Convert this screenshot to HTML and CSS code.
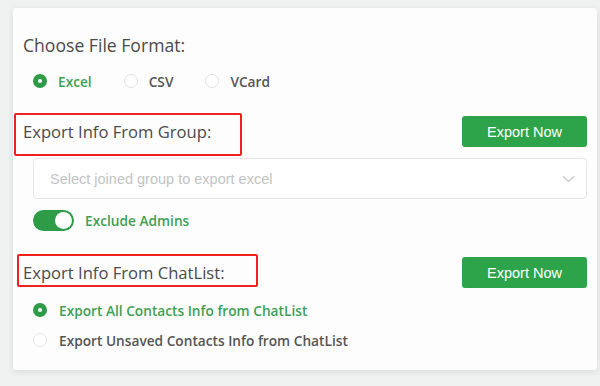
FILE: index.html
```html
<!DOCTYPE html>
<html>
<head>
<meta charset="utf-8">
<link rel="stylesheet" href="styles.css">
</head>
<body>
<div class="card">
  <div class="title">Choose File Format:</div>
  <div class="radio-row">
    <label class="radio checked"><span class="dot"></span>Excel</label>
    <label class="radio"><span class="dot"></span>CSV</label>
    <label class="radio"><span class="dot"></span>VCard</label>
  </div>

  <div class="section-head first">
    <div class="heading">Export Info From Group:<span class="mark mark-group"></span></div>
    <button class="btn">Export Now</button>
  </div>
  <div class="select">
    <span class="placeholder">Select joined group to export excel</span>
    <svg class="chev" width="13" height="8" viewBox="0 0 13 8"><path d="M1 1.2 L6.5 6.5 L12 1.2" fill="none" stroke="#c9c9c9" stroke-width="1.3"/></svg>
  </div>
  <div class="toggle-row">
    <span class="toggle"><span class="knob"></span></span>
    <span class="toggle-label">Exclude Admins</span>
  </div>

  <div class="section-head second">
    <div class="heading">Export Info From ChatList:<span class="mark mark-chat"></span></div>
    <button class="btn">Export Now</button>
  </div>
  <div class="radio-list">
    <label class="radio checked"><span class="dot"></span>Export All Contacts Info from ChatList</label>
    <label class="radio"><span class="dot"></span>Export Unsaved Contacts Info from ChatList</label>
  </div>
</div>
</body>
</html>
```
FILE: styles.css
```css
html, body {
  margin: 0;
  padding: 0;
  background: #eff0f0;
  width: 600px;
  height: 386px;
  overflow: hidden;
}
.card {
  box-sizing: border-box;
  margin: 8px 0 0 13px;
  width: 584px;
  height: 362px;
  padding: 25px 10px 0 10px;
  background: #fdfdfd;
  border-radius: 3px;
  box-shadow: 0 2px 6px rgba(0,0,0,0.09);
  font-family: "Open Sans", "Noto Sans", sans-serif;
}
.title {
  font-size: 17.6px;
  line-height: 24px;
  color: #4a4a4a;
}
.heading {
  font-size: 16.6px;
  line-height: 24px;
  color: #4a4a4a;
}
.radio-row {
  display: flex;
  align-items: center;
  height: 20px;
  margin-top: 14px;
  padding-left: 10px;
}
.radio {
  display: flex;
  align-items: center;
  font-size: 13.7px;
  font-weight: 600;
  color: #555;
  height: 20px;
}
.radio-row .radio { margin-right: 32px; }
.radio .dot {
  box-sizing: border-box;
  width: 14px;
  height: 14px;
  border-radius: 50%;
  border: 1px solid #e2e2e2;
  background: #fff;
  margin-right: 11px;
  position: relative;
}
.radio.checked { color: #3f9f55; }
.radio.checked .dot {
  border: none;
  background: #2e9c47;
}
.radio.checked .dot::after {
  content: "";
  position: absolute;
  left: 5px;
  top: 5px;
  width: 4px;
  height: 4px;
  border-radius: 50%;
  background: #fff;
}
.section-head {
  display: flex;
  align-items: center;
  justify-content: space-between;
  height: 31px;
}
.section-head.first { margin-top: 25px; }
.section-head.second { margin-top: 26px; }
.heading { position: relative; }
.mark {
  position: absolute;
  border: 2.5px solid #f0201f;
  border-radius: 2px;
  pointer-events: none;
}
.mark-group { left: -9px; top: -7px; width: 224px; height: 39px; }
.mark-chat { left: -6px; top: -7px; width: 237px; height: 29px; }
.btn {
  width: 125px;
  height: 31px;
  border: none;
  border-radius: 3px;
  background: #2ea44a;
  color: #fff;
  font-family: "Liberation Sans", Arial, sans-serif;
  font-size: 14.5px;
  padding: 0;
}
.select {
  box-sizing: border-box;
  margin: 11px 0 0 10px;
  height: 41px;
  border: 1px solid #e6e6e6;
  border-radius: 4px;
  background: #fff;
  display: flex;
  align-items: center;
  justify-content: space-between;
  padding: 0 11px 0 16px;
}
.placeholder {
  font-family: "Liberation Sans", Arial, sans-serif;
  font-size: 14.5px;
  color: #c3c3c3;
}
.toggle-row {
  display: flex;
  align-items: center;
  margin: 11px 0 0 10px;
  height: 21px;
}
.toggle {
  position: relative;
  width: 41px;
  height: 21px;
  border-radius: 11px;
  background: #2e9c47;
  margin-right: 11px;
}
.knob {
  position: absolute;
  right: 2px;
  top: 2px;
  width: 17px;
  height: 17px;
  border-radius: 50%;
  background: #fff;
}
.toggle-label {
  font-size: 13.7px;
  font-weight: 600;
  color: #3f9f55;
}
.radio-list {
  margin-top: 12px;
  padding-left: 10px;
  display: flex;
  flex-direction: column;
  gap: 10px;
}
.radio-list .radio .dot { margin-right: 12px; }
```
